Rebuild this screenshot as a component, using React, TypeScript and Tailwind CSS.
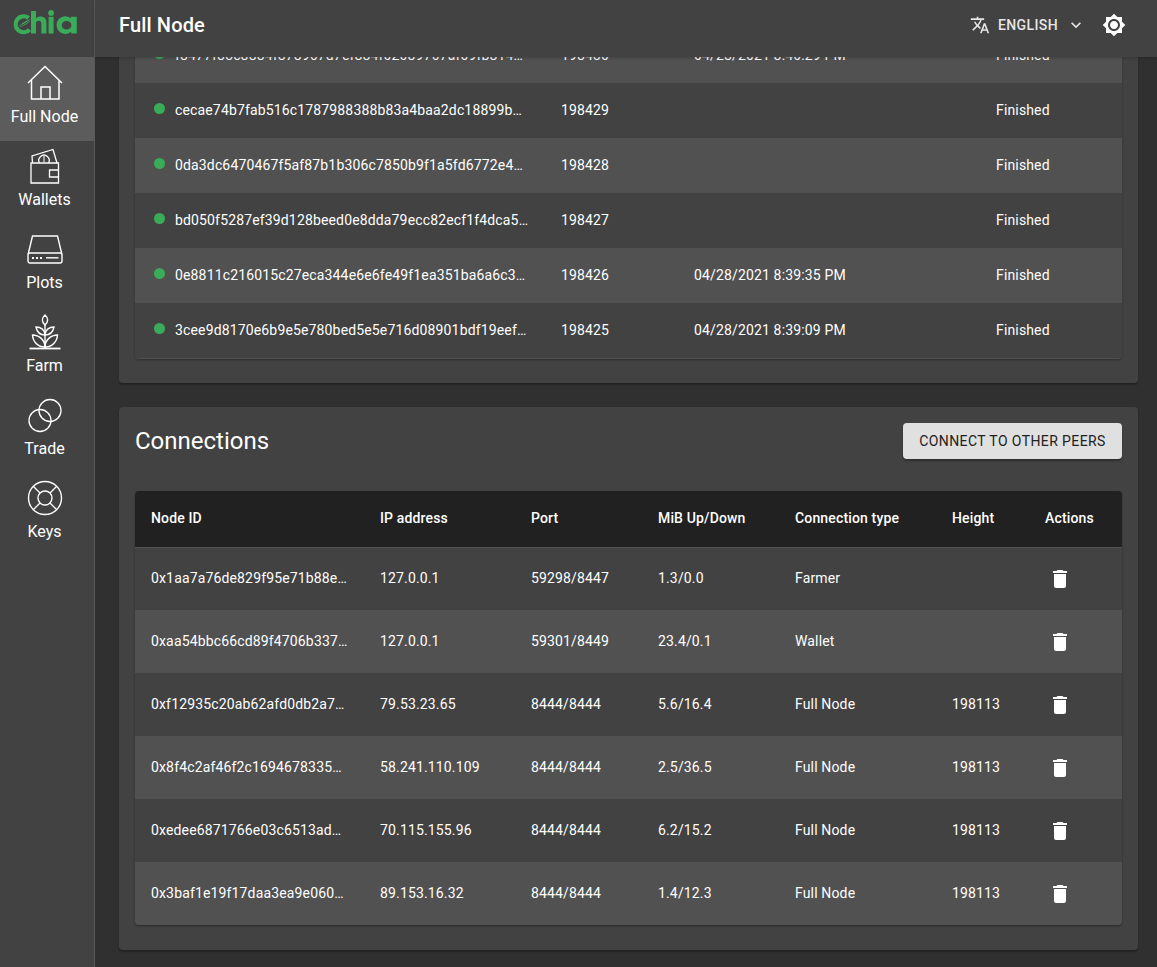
import React from "react"

const blocks = [
  { hash: "f8477f83c8884f878967d7ef884f02089707af09fb8146c3e1", height: "198430", time: "04/28/2021 8:40:29 PM" },
  { hash: "cecae74b7fab516c1787988388b83a4baa2dc18899b0c5d1e", height: "198429", time: "" },
  { hash: "0da3dc6470467f5af87b1b306c7850b9f1a5fd6772e41c0a8", height: "198428", time: "" },
  { hash: "bd050f5287ef39d128beed0e8dda79ecc82ecf1f4dca5e7b3", height: "198427", time: "" },
  { hash: "0e8811c216015c27eca344e6e6fe49f1ea351ba6a6c3d90f2", height: "198426", time: "04/28/2021 8:39:35 PM" },
  { hash: "3cee9d8170e6b9e5e780bed5e5e716d08901bdf19eef47a6c", height: "198425", time: "04/28/2021 8:39:09 PM" },
]

const peers = [
  { id: "0x1aa7a76de829f95e71b88e5c0d", ip: "127.0.0.1", port: "59298/8447", mib: "1.3/0.0", type: "Farmer", height: "" },
  { id: "0xaa54bbc66cd89f4706b337c1f2", ip: "127.0.0.1", port: "59301/8449", mib: "23.4/0.1", type: "Wallet", height: "" },
  { id: "0xf12935c20ab62afd0db2a7e884", ip: "79.53.23.65", port: "8444/8444", mib: "5.6/16.4", type: "Full Node", height: "198113" },
  { id: "0x8f4c2af46f2c16946783351a0b", ip: "58.241.110.109", port: "8444/8444", mib: "2.5/36.5", type: "Full Node", height: "198113" },
  { id: "0xedee6871766e03c6513ad97f42", ip: "70.115.155.96", port: "8444/8444", mib: "6.2/15.2", type: "Full Node", height: "198113" },
  { id: "0x3baf1e19f17daa3ea9e060d2b7", ip: "89.153.16.32", port: "8444/8444", mib: "1.4/12.3", type: "Full Node", height: "198113" },
]

function HomeIcon() {
  return (
    <svg width="36" height="36" viewBox="0 0 36 36" fill="none" stroke="currentColor" strokeWidth="1.5">
      <path d="M1 18 L18 1.5 L35 18" />
      <path d="M4.5 15 V34 H32 V15" />
      <path d="M14 34 V22 H23 V34" />
    </svg>
  )
}

function WalletIcon() {
  return (
    <svg width="30" height="36" viewBox="0 0 30 36" fill="none" stroke="currentColor" strokeWidth="1.3">
      <path d="M2.5 15 L2 8 L23 1.5 L27 15" />
      <path d="M9.5 15 A5.2 5.2 0 1 1 18.5 15" />
      <path d="M14 8 V14" strokeWidth="1" />
      <path d="M1 15 H28.5 V35 H1 Z" />
      <path d="M28.5 22 H19.5 V29 H28.5" />
    </svg>
  )
}

function PlotsIcon() {
  return (
    <svg width="36" height="29" viewBox="0 0 36 29" fill="none" stroke="currentColor" strokeWidth="1.4">
      <path d="M1.2 19 L5.5 1 H30.5 L34.8 19" />
      <rect x="1" y="18" width="34" height="10" rx="2" />
      <path d="M19 22.8 H31.5" />
      <path d="M5 23 H7 M9 23 H11 M13 23 H15" strokeWidth="1.8" />
    </svg>
  )
}

function FarmIcon() {
  return (
    <svg width="32" height="36" viewBox="0 0 32 36" fill="none" stroke="currentColor" strokeWidth="1.4">
      <path d="M0.5 34.5 H31.5" strokeWidth="1.8" />
      <path d="M16 1 C19.5 4 19.5 8 16 11 C12.5 8 12.5 4 16 1 Z" />
      <path d="M16 11 V34" />
      <path d="M16 21 C11 21 8 18 7 13 C12 13 16 16 16 21 Z" />
      <path d="M16 21 C21 21 24 18 25 13 C20 13 16 16 16 21 Z" />
      <path d="M16 33 C9 33 4 28 3.5 21 C10 21 16 26 16 33 Z" />
      <path d="M16 33 C23 33 28 28 28.5 21 C22 21 16 26 16 33 Z" />
    </svg>
  )
}

function TradeIcon() {
  return (
    <svg width="34" height="35" viewBox="0 0 34 35" fill="none" stroke="currentColor" strokeWidth="1.3">
      <circle cx="22" cy="12.5" r="11" />
      <circle cx="12" cy="22.5" r="11" />
    </svg>
  )
}

function KeysIcon() {
  return (
    <svg width="36" height="36" viewBox="0 0 36 36" fill="none" stroke="currentColor" strokeWidth="1.4">
      <circle cx="18" cy="18" r="16.5" />
      <circle cx="18" cy="18" r="7" />
      <path d="M6.5 6.5 L13 13 M29.5 6.5 L23 13 M6.5 29.5 L13 23 M29.5 29.5 L23 23" />
    </svg>
  )
}

function ChiaLogo() {
  return (
    <svg width="64" height="25" viewBox="0 0 64 25" fill="#3aac59">
      {/* c with the leaf inside it */}
      <path d="M16.6 19.6 A8 8 0 1 1 15.6 8" fill="none" stroke="#3aac59" strokeWidth="4.2" />
      <path d="M0 20.5 C5 17.5 10 11 18 9 C16 14 10 16.5 6 17 C4 18.5 2 19.8 0 20.5 Z" />
      <path d="M4.8 16.6 C9 15.8 13 13.4 17.6 9.6" fill="none" stroke="#424242" strokeWidth="1" />
      {/* h */}
      <path d="M18 1 H23 V8.2 C24.2 7 25.8 6.4 27.6 6.4 C31 6.4 33.4 8.6 33.4 12.4 V23.6 H28.4 V13.4 C28.4 11.8 27.4 10.8 26 10.8 C24.6 10.8 23.6 11.6 23 12.6 V23.6 H18 Z" />
      {/* i */}
      <path d="M35.6 6.8 H40.6 V23.6 H35.6 Z" />
      <circle cx="38.1" cy="2.9" r="2.9" />
      {/* a */}
      <path
        fillRule="evenodd"
        d="M52.4 6.3 C54.6 6.3 56.4 7.2 57.8 8.6 V6.8 H63.8 V23.6 H58.2 V21.6 C56.8 23.2 54.8 24 52.6 24 C47.8 24 43.6 20.4 43.6 15.1 C43.6 9.9 47.8 6.3 52.4 6.3 Z M53.6 10.9 C50.8 10.9 48.8 12.8 48.8 15.2 C48.8 17.6 50.8 19.4 53.6 19.4 C56.4 19.4 58.4 17.6 58.4 15.2 C58.4 12.8 56.4 10.9 53.6 10.9 Z"
      />
    </svg>
  )
}

function TranslateIcon() {
  return (
    <svg width="20" height="20" viewBox="0 0 24 24" fill="currentColor">
      <path d="M12.87 15.07l-2.54-2.51.03-.03c1.74-1.94 2.98-4.17 3.71-6.53H17V4h-7V2H8v2H1v1.99h11.17C11.5 7.92 10.44 9.75 9 11.35 8.07 10.32 7.3 9.19 6.69 8h-2c.73 1.63 1.73 3.17 2.98 4.56l-5.09 5.02L4 19l5-5 3.11 3.11.76-2.04zM18.5 10h-2L12 22h2l1.12-3h4.75L21 22h2l-4.5-12zm-2.62 7l1.62-4.33L19.12 17h-3.24z" />
    </svg>
  )
}

function ExpandIcon() {
  return (
    <svg width="20" height="20" viewBox="0 0 24 24" fill="currentColor">
      <path d="M16.59 8.59L12 13.17 7.41 8.59 6 10l6 6 6-6z" />
    </svg>
  )
}

function BrightnessIcon() {
  return (
    <svg width="24" height="24" viewBox="0 0 24 24" fill="currentColor">
      <path d="M20 8.69V4h-4.69L12 .69 8.69 4H4v4.69L.69 12 4 15.31V20h4.69L12 23.31 15.31 20H20v-4.69L23.31 12 20 8.69zM12 18c-3.31 0-6-2.69-6-6s2.69-6 6-6 6 2.69 6 6-2.69 6-6 6zm0-10c-2.21 0-4 1.79-4 4s1.79 4 4 4 4-1.79 4-4-1.79-4-4-4z" />
    </svg>
  )
}

function TrashIcon() {
  return (
    <svg width="24" height="24" viewBox="0 0 24 24" fill="currentColor">
      <path d="M6 19c0 1.1.9 2 2 2h8c1.1 0 2-.9 2-2V7H6v12zM19 4h-3.5l-1-1h-5l-1 1H5v2h14V4z" />
    </svg>
  )
}

function NavItem({ label, icon, active }: { label: string; icon: React.ReactNode; active?: boolean }) {
  return (
    <div className={`flex flex-col items-center pr-[5px] pt-[8px] text-white ${active ? "mb-[-1px] h-[84px] bg-[#5c5c5c]" : "h-[83px]"}`}>
      <div className="flex h-[36px] items-center justify-center">{icon}</div>
      <span className="mt-[6px] text-[16px] leading-[19px]">{label}</span>
    </div>
  )
}

export default function App() {
  return (
    <div className="flex h-[967px] w-[1157px] overflow-hidden bg-[#303030] font-['Roboto',sans-serif] text-white">
      <aside className="w-[95px] shrink-0 border-r border-[#5a5a5a] bg-[#424242]">
        <div className="flex h-[57px] items-start justify-center pr-[5px] pt-[10px]">
          <ChiaLogo />
        </div>
        <NavItem label="Full Node" icon={<HomeIcon />} active />
        <NavItem label="Wallets" icon={<WalletIcon />} />
        <NavItem label="Plots" icon={<PlotsIcon />} />
        <NavItem label="Farm" icon={<FarmIcon />} />
        <NavItem label="Trade" icon={<TradeIcon />} />
        <NavItem label="Keys" icon={<KeysIcon />} />
      </aside>

      <div className="flex min-w-0 flex-1 flex-col">
        <header className="relative z-10 flex h-[57px] shrink-0 items-center bg-[#424242] pb-[7px] pl-[24px] pr-[31px] shadow-[0_1px_3px_rgba(0,0,0,0.2)]">
          <h1 className="text-[20px] font-medium tracking-[0.15px]">Full Node</h1>
          <div className="ml-auto flex items-center text-[#e6e6e6]">
            <TranslateIcon />
            <span className="ml-[8px] text-[14px] font-medium tracking-[0.4px]">ENGLISH</span>
            <span className="ml-[8px]">
              <ExpandIcon />
            </span>
          </div>
          <div className="ml-[16px] text-white">
            <BrightnessIcon />
          </div>
        </header>

        <main className="min-h-0 flex-1 overflow-hidden pl-[24px] pr-[19px]">
          <section className="mt-[-29px] rounded-[4px] bg-[#424242] px-[16px] pb-[24px] shadow-[0_2px_2px_rgba(0,0,0,0.3)]">
            <div className="rounded-b-[4px] border-b border-[#515151] shadow-[0_1px_2px_rgba(0,0,0,0.3)]">
              <table className="w-[987px] table-fixed border-collapse text-[14px] tracking-[0.15px]">
                <colgroup>
                  <col className="w-[426px]" />
                  <col className="w-[133px]" />
                  <col className="w-[302px]" />
                  <col className="w-[126px]" />
                </colgroup>
                <tbody>
                  {blocks.map((b, i) => (
                    <tr key={b.height} className={`h-[55px] ${i % 2 === 0 ? "bg-[#515151]" : "bg-[#424242]"}`}>
                      <td className="p-0 pl-[19px]">
                        <div className="flex items-center">
                          <span className="mb-[4px] h-[11px] w-[11px] shrink-0 rounded-full bg-[#3aac59]" />
                          <span className="ml-[10px] w-[354px] truncate">{b.hash}</span>
                        </div>
                      </td>
                      <td className="p-0">{b.height}</td>
                      <td className="p-0">{b.time}</td>
                      <td className="p-0">Finished</td>
                    </tr>
                  ))}
                </tbody>
              </table>
            </div>
          </section>

          <section className="mt-[24px] rounded-[4px] bg-[#424242] px-[16px] pb-[25px] pt-[16px] shadow-[0_2px_2px_rgba(0,0,0,0.3)]">
            <div className="flex h-[36px] items-center justify-between">
              <h2 className="text-[24px] leading-[36px]">Connections</h2>
              <button className="h-[36px] w-[219px] rounded-[4px] bg-[#e0e0e0] text-center text-[14px] font-[450] tracking-[0.4px] text-[#212121] shadow-[0_2px_2px_rgba(0,0,0,0.3)]">
                CONNECT TO OTHER PEERS
              </button>
            </div>
            <div className="mt-[32px] overflow-hidden rounded-[4px] shadow-[0_1px_2px_rgba(0,0,0,0.4)]">
              <table className="w-[987px] table-fixed border-collapse text-left text-[14px] tracking-[0.15px]">
                <colgroup>
                  <col className="w-[229px]" />
                  <col className="w-[151px]" />
                  <col className="w-[127px]" />
                  <col className="w-[137px]" />
                  <col className="w-[157px]" />
                  <col className="w-[93px]" />
                  <col className="w-[93px]" />
                </colgroup>
                <thead>
                  <tr className="h-[56px] border-b border-[#515151] bg-[#212121]">
                    <th className="p-0 pl-[16px] font-medium">Node ID</th>
                    <th className="p-0 pl-[16px] font-medium">IP address</th>
                    <th className="p-0 pl-[16px] font-medium">Port</th>
                    <th className="p-0 pl-[16px] font-medium">MiB Up/Down</th>
                    <th className="p-0 pl-[16px] font-medium">Connection type</th>
                    <th className="p-0 pl-[16px] font-medium">Height</th>
                    <th className="p-0 pl-[16px] font-medium">Actions</th>
                  </tr>
                </thead>
                <tbody>
                  {peers.map((p, i) => (
                    <tr key={p.id} className={`h-[63px] ${i % 2 === 1 ? "bg-[#515151]" : "bg-[#424242]"}`}>
                      <td className="p-0 pl-[16px]">
                        <div className="w-[197px] truncate">{p.id}</div>
                      </td>
                      <td className="p-0 pl-[16px]">{p.ip}</td>
                      <td className="p-0 pl-[16px]">{p.port}</td>
                      <td className="p-0 pl-[16px]">{p.mib}</td>
                      <td className="p-0 pl-[16px]">{p.type}</td>
                      <td className="p-0 pl-[16px]">{p.height}</td>
                      <td className="p-0 pl-[19px]">
                        <TrashIcon />
                      </td>
                    </tr>
                  ))}
                </tbody>
              </table>
            </div>
          </section>
        </main>
      </div>
    </div>
  )
}
